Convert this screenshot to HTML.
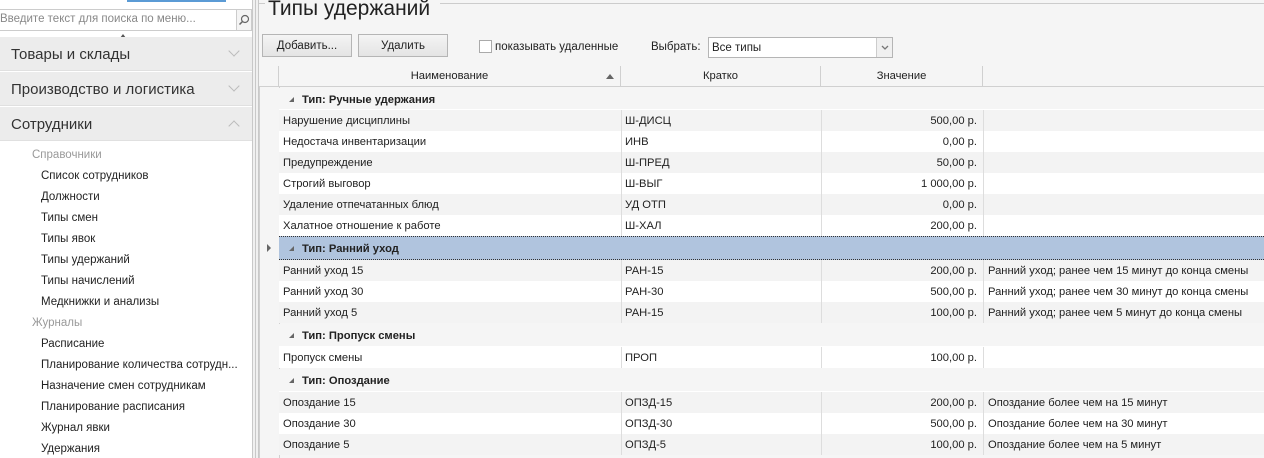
<!DOCTYPE html>
<html><head><meta charset="utf-8"><style>
*{box-sizing:border-box;margin:0;padding:0}
body{width:1264px;height:458px;overflow:hidden;background:#f5f5f5;font-family:"Liberation Sans","DejaVu Sans",sans-serif;font-size:11.5px;color:#222;position:relative}
.a{position:absolute;white-space:nowrap}
.side{position:absolute;left:0;top:0;width:252px;height:458px;background:#fff}
.acc{position:absolute;left:0;width:252px;height:34px;background:#ececec;font-size:15px;color:#333;padding:9px 0 0 11px;border-bottom:1px solid #e0e0e0}
.chev{position:absolute;right:14px;top:10px;width:8px;height:8px;border-right:1.5px solid #bbb;border-bottom:1.5px solid #bbb;transform:rotate(45deg)}
.chev.up{transform:rotate(225deg);top:15px}
.si{position:absolute;left:41px;font-size:11.5px;color:#222}
.sh{position:absolute;left:32px;font-size:11.5px;color:#999}
.btn{position:absolute;height:23px;border:1px solid #b5b5b5;background:linear-gradient(#f4f4f4,#e4e4e4);text-align:center;line-height:23px;font-size:11.5px}
.row{position:absolute;left:279px;width:985px;height:21px;line-height:22px;font-size:11.2px}
.row span{position:absolute;top:0;height:21px}
.g{background:#f3f3f3}.w{background:#fff}
.c1{left:4px}.c2{left:342px;border-left:1px solid #ddd;padding-left:3px;width:200px}
.c3{left:542px;width:162px;border-left:1px solid #ddd;text-align:right;padding-right:6px}
.c4{left:704px;border-left:1px solid #ddd;padding-left:4px;width:281px}
.grp{position:absolute;left:279px;width:985px;height:22px;line-height:24px;font-weight:bold;background:#f5f5f5;padding-left:23px;border-bottom:1px solid #fff;font-size:11.2px}
.grp:before{content:"";position:absolute;left:10px;top:9px;border-left:5px solid transparent;border-bottom:5px solid #666}
.hd{position:absolute;top:66px;height:21px;line-height:20px;text-align:center;border-right:1px solid #d0d0d0;border-bottom:1px solid #d0d0d0;background:#f5f5f5;font-size:11.2px}
</style></head><body>
<div class="side">
<div class="a" style="left:127px;top:0;width:99px;height:2px;background:#5b9bd5"></div>
<div class="a" style="left:0;top:9px;width:237px;height:22px;border:1px solid #ccc;border-left:none;background:#fff;color:#888;padding:3px 0 0 0;font-size:11.5px">Введите текст для поиска по меню...</div>
<div class="a" style="left:236px;top:9px;width:16px;height:22px;border:1px solid #ccc;background:#f4f4f4"><svg width="14" height="20" viewBox="0 0 14 20"><circle cx="8" cy="9" r="3.5" fill="none" stroke="#666" stroke-width="1.2"/><line x1="5.5" y1="11.5" x2="2.5" y2="14.5" stroke="#666" stroke-width="1.5"/></svg></div>
<div class="a" style="left:120px;top:34px;border-left:3px solid transparent;border-right:3px solid transparent;border-bottom:4px solid #555"></div>
<div class="acc" style="top:37px">Товары и склады<div class="chev"></div></div>
<div class="acc" style="top:72px">Производство и логистика<div class="chev"></div></div>
<div class="acc" style="top:107px">Сотрудники<div class="chev up"></div></div>
<div class="sh" style="top:149px">Справочники</div>
<div class="si" style="top:170px">Список сотрудников</div>
<div class="si" style="top:191px">Должности</div>
<div class="si" style="top:212px">Типы смен</div>
<div class="si" style="top:233px">Типы явок</div>
<div class="si" style="top:254px">Типы удержаний</div>
<div class="si" style="top:275px">Типы начислений</div>
<div class="si" style="top:296px">Медкнижки и анализы</div>
<div class="sh" style="top:317px">Журналы</div>
<div class="si" style="top:338px">Расписание</div>
<div class="si" style="top:359px">Планирование количества сотрудн...</div>
<div class="si" style="top:380px">Назначение смен сотрудникам</div>
<div class="si" style="top:401px">Планирование расписания</div>
<div class="si" style="top:422px">Журнал явки</div>
<div class="si" style="top:443px">Удержания</div>
</div>
<div class="a" style="left:252px;top:0;width:7px;height:458px;background:#f0f0f0;border-left:1px solid #c8c8c8;border-right:1px solid #c8c8c8"></div>
<div class="a" style="left:255px;top:0;width:1px;height:458px;background:#c8c8c8"></div>
<div class="a" style="left:259px;top:3px;width:6px;height:1px;background:#ccc"></div>
<div class="a" style="left:440px;top:3px;width:824px;height:1px;background:#ccc"></div>
<div class="a" style="left:268px;top:-3px;font-size:21px;color:#222">Типы удержаний</div>
<div class="btn" style="left:262px;top:34px;width:90px">Добавить...</div>
<div class="btn" style="left:358px;top:34px;width:90px">Удалить</div>
<div class="a" style="left:479px;top:40px;width:13px;height:13px;border:1px solid #aaa;background:#fff"></div>
<div class="a" style="left:495px;top:41px">показывать удаленные</div>
<div class="a" style="left:651px;top:41px">Выбрать:</div>
<div class="a" style="left:708px;top:37px;width:185px;height:21px;border:1px solid #b5b5b5;background:#fff;padding:4px 0 0 3px">Все типы</div>
<div class="a" style="left:876px;top:38px;width:16px;height:19px;border-left:1px solid #ccc;background:#f0f0f0"><svg width="16" height="19"><path d="M5 8l3 3 3-3" fill="none" stroke="#777" stroke-width="1.3"/></svg></div>
<div class="a" style="left:259px;top:66px;width:1005px;height:392px;background:#f5f5f5;border-top:1px solid #d0d0d0;border-left:1px solid #d0d0d0"></div>
<div class="a" style="left:279px;top:87px;width:1px;height:371px;background:#d0d0d0"></div>
<div class="hd" style="left:259px;width:20px"></div>
<div class="hd" style="left:279px;width:342px">Наименование<span style="position:absolute;right:6px;top:8px;border-left:4px solid transparent;border-right:4px solid transparent;border-bottom:5px solid #666"></span></div>
<div class="hd" style="left:621px;width:200px">Кратко</div>
<div class="hd" style="left:821px;width:162px">Значение</div>
<div class="hd" style="left:983px;width:281px;border-right:none"></div>

<div class="grp" style="top:88px">Тип: Ручные удержания</div>
<div class="row g" style="top:110px"><span class="c1">Нарушение дисциплины</span><span class="c2">Ш-ДИСЦ</span><span class="c3">500,00 р.</span><span class="c4"></span></div>
<div class="row w" style="top:131px"><span class="c1">Недостача инвентаризации</span><span class="c2">ИНВ</span><span class="c3">0,00 р.</span><span class="c4"></span></div>
<div class="row g" style="top:152px"><span class="c1">Предупреждение</span><span class="c2">Ш-ПРЕД</span><span class="c3">50,00 р.</span><span class="c4"></span></div>
<div class="row w" style="top:173px"><span class="c1">Строгий выговор</span><span class="c2">Ш-ВЫГ</span><span class="c3">1 000,00 р.</span><span class="c4"></span></div>
<div class="row g" style="top:194px"><span class="c1">Удаление отпечатанных блюд</span><span class="c2">УД ОТП</span><span class="c3">0,00 р.</span><span class="c4"></span></div>
<div class="row w" style="top:215px"><span class="c1">Халатное отношение к работе</span><span class="c2">Ш-ХАЛ</span><span class="c3">200,00 р.</span><span class="c4"></span></div>
<div class="grp" style="top:236px;height:24px;line-height:25px;background:#b0c4de;border-top:1px dotted #333;border-bottom:1px dotted #333">Тип: Ранний уход</div>
<div class="a" style="left:267px;top:244px;border-top:4px solid transparent;border-bottom:4px solid transparent;border-left:4px solid #666"></div>
<div class="row g" style="top:260px"><span class="c1">Ранний уход 15</span><span class="c2">РАН-15</span><span class="c3">200,00 р.</span><span class="c4">Ранний уход; ранее чем 15 минут до конца смены</span></div>
<div class="row w" style="top:281px"><span class="c1">Ранний уход 30</span><span class="c2">РАН-30</span><span class="c3">500,00 р.</span><span class="c4">Ранний уход; ранее чем 30 минут до конца смены</span></div>
<div class="row g" style="top:302px"><span class="c1">Ранний уход 5</span><span class="c2">РАН-15</span><span class="c3">100,00 р.</span><span class="c4">Ранний уход; ранее чем 5 минут до конца смены</span></div>
<div class="grp" style="top:324px;height:23px;line-height:25px">Тип: Пропуск смены</div>
<div class="row w" style="top:347px"><span class="c1">Пропуск смены</span><span class="c2">ПРОП</span><span class="c3">100,00 р.</span><span class="c4"></span></div>
<div class="grp" style="top:369px;height:23px;line-height:25px">Тип: Опоздание</div>
<div class="row g" style="top:392px"><span class="c1">Опоздание 15</span><span class="c2">ОПЗД-15</span><span class="c3">200,00 р.</span><span class="c4">Опоздание более чем на 15 минут</span></div>
<div class="row w" style="top:413px"><span class="c1">Опоздание 30</span><span class="c2">ОПЗД-30</span><span class="c3">500,00 р.</span><span class="c4">Опоздание более чем на 30 минут</span></div>
<div class="row g" style="top:434px"><span class="c1">Опоздание 5</span><span class="c2">ОПЗД-5</span><span class="c3">100,00 р.</span><span class="c4">Опоздание более чем на 5 минут</span></div>
</body></html>
